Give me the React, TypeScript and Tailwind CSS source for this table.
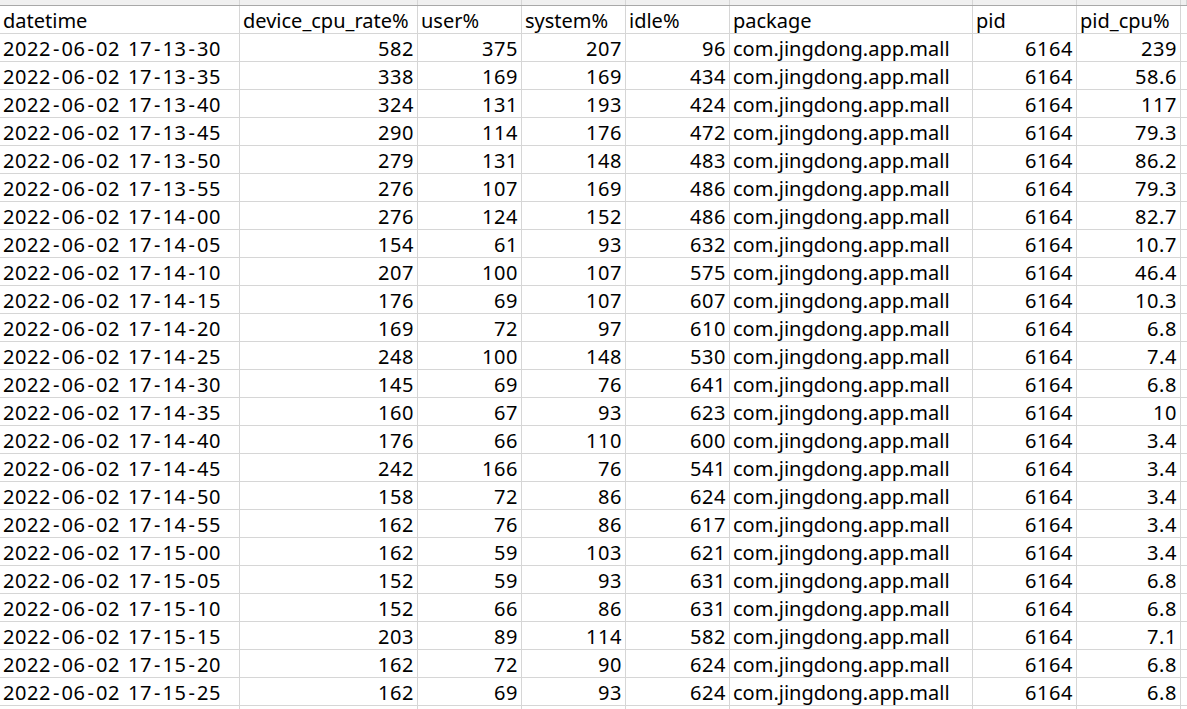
import React from "react";

const rows: [string, string, string, string, string, string, string, string][] = [
  ["2022-06-02 17-13-30", "582", "375", "207", "96", "com.jingdong.app.mall", "6164", "239"],
  ["2022-06-02 17-13-35", "338", "169", "169", "434", "com.jingdong.app.mall", "6164", "58.6"],
  ["2022-06-02 17-13-40", "324", "131", "193", "424", "com.jingdong.app.mall", "6164", "117"],
  ["2022-06-02 17-13-45", "290", "114", "176", "472", "com.jingdong.app.mall", "6164", "79.3"],
  ["2022-06-02 17-13-50", "279", "131", "148", "483", "com.jingdong.app.mall", "6164", "86.2"],
  ["2022-06-02 17-13-55", "276", "107", "169", "486", "com.jingdong.app.mall", "6164", "79.3"],
  ["2022-06-02 17-14-00", "276", "124", "152", "486", "com.jingdong.app.mall", "6164", "82.7"],
  ["2022-06-02 17-14-05", "154", "61", "93", "632", "com.jingdong.app.mall", "6164", "10.7"],
  ["2022-06-02 17-14-10", "207", "100", "107", "575", "com.jingdong.app.mall", "6164", "46.4"],
  ["2022-06-02 17-14-15", "176", "69", "107", "607", "com.jingdong.app.mall", "6164", "10.3"],
  ["2022-06-02 17-14-20", "169", "72", "97", "610", "com.jingdong.app.mall", "6164", "6.8"],
  ["2022-06-02 17-14-25", "248", "100", "148", "530", "com.jingdong.app.mall", "6164", "7.4"],
  ["2022-06-02 17-14-30", "145", "69", "76", "641", "com.jingdong.app.mall", "6164", "6.8"],
  ["2022-06-02 17-14-35", "160", "67", "93", "623", "com.jingdong.app.mall", "6164", "10"],
  ["2022-06-02 17-14-40", "176", "66", "110", "600", "com.jingdong.app.mall", "6164", "3.4"],
  ["2022-06-02 17-14-45", "242", "166", "76", "541", "com.jingdong.app.mall", "6164", "3.4"],
  ["2022-06-02 17-14-50", "158", "72", "86", "624", "com.jingdong.app.mall", "6164", "3.4"],
  ["2022-06-02 17-14-55", "162", "76", "86", "617", "com.jingdong.app.mall", "6164", "3.4"],
  ["2022-06-02 17-15-00", "162", "59", "103", "621", "com.jingdong.app.mall", "6164", "3.4"],
  ["2022-06-02 17-15-05", "152", "59", "93", "631", "com.jingdong.app.mall", "6164", "6.8"],
  ["2022-06-02 17-15-10", "152", "66", "86", "631", "com.jingdong.app.mall", "6164", "6.8"],
  ["2022-06-02 17-15-15", "203", "89", "114", "582", "com.jingdong.app.mall", "6164", "7.1"],
  ["2022-06-02 17-15-20", "162", "72", "90", "624", "com.jingdong.app.mall", "6164", "6.8"],
  ["2022-06-02 17-15-25", "162", "69", "93", "624", "com.jingdong.app.mall", "6164", "6.8"],
];

const headers = ["datetime", "device_cpu_rate%", "user%", "system%", "idle%", "package", "pid", "pid_cpu%", ""];

const cols = "grid grid-cols-[240px_178px_104px_104px_104px_243px_104px_104px_1fr]";

function DateText({ s }: { s: string }) {
  const parts = s.split(/(-| )/);
  return (
    <span>
      {parts.map((p, i) =>
        p === "-" ? (
          <span key={i} className="inline-block w-[10.5px] text-center">-</span>
        ) : p === " " ? (
          <span key={i} className="inline-block w-[8px]"> </span>
        ) : (
          <span key={i} className="tracking-[0.55px]">{p}</span>
        )
      )}
    </span>
  );
}

const cell = "h-[28px] border-b border-r border-[#d6d6d6] px-[3px] pt-[3px] leading-[24px] whitespace-nowrap overflow-hidden";

export default function App() {
  return (
    <div className="w-[1187px] h-[709px] overflow-hidden bg-white text-black text-[20px]" style={{ fontFamily: '"Noto Sans", "Noto Sans CJK SC", sans-serif' }}>
      <div className={`${cols} h-[5px] bg-[#f0f0f0]`}>
        {headers.map((_, i) => (
          <div key={i} className="border-r border-[#d6d6d6] h-[5px]" />
        ))}
      </div>
      <div className="h-[1px] bg-[#a8a8a8]" />
      <div className={cols}>
        {headers.map((h, i) => (
          <div key={i} className={`${cell} h-[28px]`}>{h}</div>
        ))}
      </div>
      {rows.map((r, ri) => (
        <div key={ri} className={cols}>
          <div className={cell}><DateText s={r[0]} /></div>
          <div className={`${cell} text-right tracking-[0.55px]`}>{r[1]}</div>
          <div className={`${cell} text-right tracking-[0.55px]`}>{r[2]}</div>
          <div className={`${cell} text-right tracking-[0.55px]`}>{r[3]}</div>
          <div className={`${cell} text-right tracking-[0.55px]`}>{r[4]}</div>
          <div className={cell}>{r[5]}</div>
          <div className={`${cell} text-right tracking-[0.55px]`}>{r[6]}</div>
          <div className={`${cell} text-right tracking-[0.55px]`}>{r[7]}</div>
          <div className={cell}></div>
        </div>
      ))}
      <div className={cols}>
        {headers.map((_, i) => (
          <div key={i} className={cell} />
        ))}
      </div>
    </div>
  );
}
